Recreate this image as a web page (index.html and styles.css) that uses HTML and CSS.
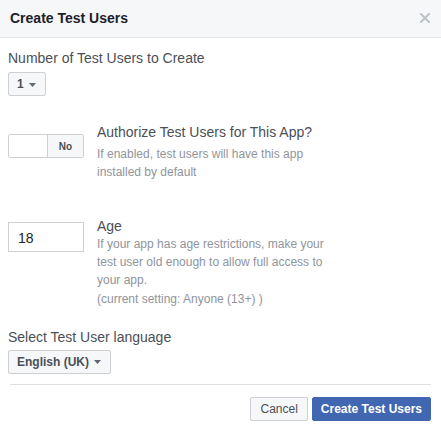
FILE: index.html
```html
<!DOCTYPE html>
<html>
<head>
<meta charset="utf-8">
<link rel="stylesheet" href="styles.css">
</head>
<body>
<div class="dialog">
  <div class="header">
    <div class="title">Create Test Users</div>
    <svg class="close" width="10" height="10" viewBox="0 0 10 10"><path d="M1 1L9 9M9 1L1 9" stroke="#bec3c9" stroke-width="2" stroke-linecap="square"/></svg>
  </div>
  <div class="body">
    <div class="label">Number of Test Users to Create</div>
    <div class="select select-count">
      <span>1</span>
      <svg class="caret" width="7" height="4" viewBox="0 0 7 4"><polygon points="0,0 7,0 3.5,4" fill="#606770"/></svg>
    </div>

    <div class="row row-auth">
      <div class="toggle">
        <div class="toggle-off"></div>
        <div class="toggle-no">No</div>
      </div>
      <div class="info">
        <div class="info-title">Authorize Test Users for This App?</div>
        <div class="info-sub info-sub-auth">If enabled, test users will have this app installed by default</div>
      </div>
    </div>

    <div class="row row-age">
      <div class="age-input">18</div>
      <div class="info">
        <div class="info-title">Age</div>
        <div class="info-sub">If your app has age restrictions, make your test user old enough to allow full access to your app.<br>(current setting: Anyone (13+) )</div>
      </div>
    </div>

    <div class="label label-lang">Select Test User language</div>
    <div class="select select-lang">
      <span>English (UK)</span>
      <svg class="caret" width="7" height="4" viewBox="0 0 7 4"><polygon points="0,0 7,0 3.5,4" fill="#606770"/></svg>
    </div>
  </div>
  <div class="footer">
    <div class="btn btn-cancel">Cancel</div>
    <div class="btn btn-primary">Create Test Users</div>
  </div>
</div>
</body>
</html>
```

FILE: styles.css
```css
html, body {
  margin: 0;
  padding: 0;
  background: #ffffff;
}
body {
  font-family: "Liberation Sans", Arial, Helvetica, sans-serif;
  color: #4b4f56;
  width: 441px;
  height: 430px;
  overflow: hidden;
}
.dialog {
  width: 441px;
}
.header {
  height: 37px;
  background: #f6f7f9;
  border-bottom: 1px solid #e5e5e5;
  display: flex;
  align-items: flex-start;
  justify-content: space-between;
  padding: 0 11px 0 10px;
  box-sizing: content-box;
}
.title {
  font-size: 14px;
  font-weight: bold;
  color: #1d2129;
  line-height: 18px;
  margin-top: 9px;
}
.close {
  margin-top: 13px;
}
.body {
  padding: 11px 8px 0 8px;
}
.label {
  font-size: 14px;
  line-height: 18px;
  color: #4b4f56;
}
.select {
  display: flex;
  width: max-content;
  align-items: center;
  height: 24px;
  box-sizing: border-box;
  border: 1px solid #ced0d4;
  border-radius: 2px;
  background: #f6f7f9;
  font-size: 12px;
  font-weight: bold;
  color: #4b4f56;
  white-space: nowrap;
  padding: 0 9px 0 8px;
}
.select .caret {
  margin-left: 5px;
  margin-top: 1px;
  flex: none;
}
.select-count {
  margin-top: 5px;
  padding: 0 9px 0 8px;
}
.row {
  display: flex;
  align-items: flex-start;
}
.row-auth {
  margin-top: 27px;
}
.row-age {
  margin-top: 35px;
}
.toggle {
  display: flex;
  width: 76px;
  height: 24px;
  box-sizing: border-box;
  border: 1px solid #ced0d4;
  border-radius: 2px;
  margin-top: 11px;
  overflow: hidden;
  flex: none;
}
.toggle-off {
  flex: 1;
  background: #ffffff;
}
.toggle-no {
  width: 36px;
  box-sizing: border-box;
  border-left: 1px solid #ced0d4;
  background: #f6f7f9;
  font-size: 10px;
  font-weight: bold;
  color: #4b4f56;
  display: flex;
  align-items: center;
  justify-content: center;
}
.age-input {
  width: 76px;
  height: 30px;
  box-sizing: border-box;
  border: 1px solid #ced0d4;
  margin-top: 5px;
  font-size: 14px;
  line-height: 30px;
  color: #1d2129;
  padding-left: 9px;
  padding-top: 2px;
  flex: none;
  display: flex;
  align-items: center;
}
.info {
  margin-left: 13px;
  width: 236px;
}
.info-title {
  font-size: 14px;
  line-height: 18px;
  color: #4b4f56;
}
.info-sub {
  font-size: 12px;
  line-height: 18.33px;
  color: #90949c;
}
.info-sub-auth {
  margin-top: 4px;
}
.label-lang {
  margin-top: 20px;
}
.select-lang {
  margin-top: 4px;
  padding: 0 9px 0 8px;
}
.footer {
  margin: 10px 10px 0 10px;
  border-top: 1px solid #dddfe2;
  padding-top: 12px;
  display: flex;
  justify-content: flex-end;
  gap: 4px;
}
.btn {
  height: 24px;
  box-sizing: border-box;
  border: 1px solid #ced0d4;
  border-radius: 2px;
  font-size: 12px;
  line-height: 22px;
  padding: 0 9px;
  background: #f6f7f9;
  color: #4b4f56;
}
.btn-primary {
  background: #4267b2;
  border-color: #4267b2;
  color: #ffffff;
  font-weight: bold;
  padding: 0 8px;
}
```
